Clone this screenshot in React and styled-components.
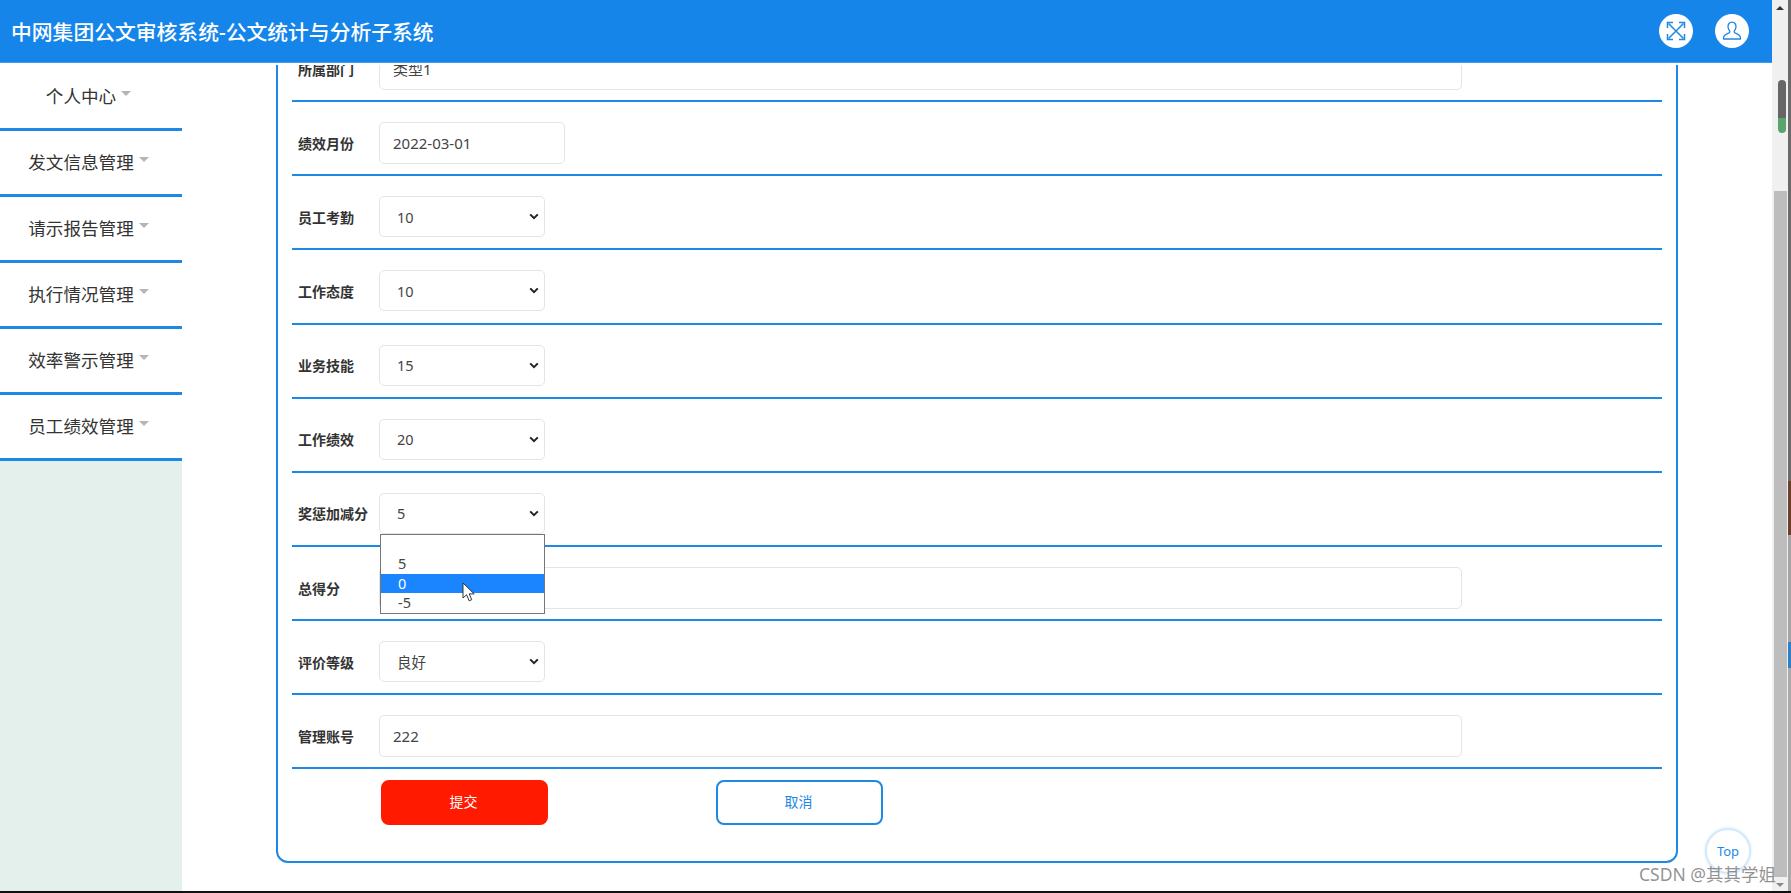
import styled, { createGlobalStyle } from "styled-components";

const BLUE = "#1e88e5";
const FONT = `"Noto Sans", "Noto Sans CJK SC", sans-serif`;
const CHEVRON = `url("data:image/svg+xml,%3Csvg xmlns='http://www.w3.org/2000/svg' width='10' height='7' viewBox='0 0 10 7'%3E%3Cpath d='M1.2 1.400 5 5.200 8.800 1.400' fill='none' stroke='%23222' stroke-width='2'/%3E%3C/svg%3E")`;

const GlobalStyle = createGlobalStyle`
  html, body {
    margin: 0;
    padding: 0;
    height: 100%;
    overflow: hidden;
    background: #fff;
  }
  * {
    box-sizing: border-box;
  }
`;

const Screen = styled.div`
  position: relative;
  width: 1791px;
  height: 893px;
  display: flex;
  flex-direction: column;
  overflow: hidden;
  font-family: ${FONT};
  border-bottom: 2px solid #111;
`;

const Window = styled.div`
  flex: 1;
  min-height: 0;
  display: flex;
`;

const Main = styled.div`
  flex: 1;
  min-width: 0;
  display: flex;
  flex-direction: column;
`;

const Header = styled.header`
  height: 63px;
  flex: none;
  margin-bottom: 2px;
  display: flex;
  align-items: center;
  justify-content: space-between;
  padding: 0 23px 1px 11px;
  background: #1585ea;
  border-bottom: 1px solid #3f9cf0;
`;

const Title = styled.h1`
  margin: 0;
  font-size: 20.8px;
  font-weight: 500;
  color: #fff;
`;

const HeaderTools = styled.div`
  display: flex;
  gap: 22px;
`;

const RoundTool = styled.span`
  width: 34px;
  height: 34px;
  border-radius: 50%;
  background: #fff;
  display: flex;
  align-items: center;
  justify-content: center;
`;

const Body = styled.div`
  flex: 1;
  min-height: 0;
  display: flex;
  overflow: hidden;
`;

const Sidebar = styled.nav`
  width: 182px;
  flex: none;
  background: #e3f0eb;
`;

const MenuItem = styled.div`
  height: 66px;
  padding: 0 5px 3px 0;
  display: flex;
  align-items: center;
  justify-content: center;
  gap: 5px;
  background: #fff;
  border-bottom: 3px solid ${BLUE};
  font-size: 17.6px;
  color: #333;
`;

const Caret = styled.i`
  width: 0;
  height: 0;
  margin-bottom: 3px;
  border-left: 5px solid transparent;
  border-right: 5px solid transparent;
  border-top: 5px solid #b5b5b5;
`;

const Content = styled.main`
  flex: 1;
  min-width: 0;
  padding-left: 94px;
`;

const Panel = styled.section`
  width: 1402px;
  margin-top: -39px;
  height: 837px;
  padding: 0 14px;
  border: 2px solid ${BLUE};
  border-radius: 12px;
`;

const Row = styled.div`
  height: 74.15px;
  padding: 19px 0 10px 6px;
  display: flex;
  align-items: center;
  border-bottom: 2px solid ${BLUE};
`;

const Label = styled.label`
  width: 81px;
  flex: none;
  font-size: 14px;
  font-weight: 600;
  color: #333;
`;

const Field = styled.input`
  width: ${(p) => p.$width}px;
  height: 42px;
  padding: 0 13px;
  border: 1px solid #e2e4e8;
  border-radius: 5px;
  background: #fff;
  font-family: ${FONT};
  font-size: 15px;
  color: #444;
  outline: none;
`;

const Picker = styled.select`
  appearance: none;
  display: block;
  width: 166px;
  height: 41px;
  padding: 0 13px 0 17px;
  border: 1px solid #e2e4e8;
  border-radius: 5px;
  background: #fff ${CHEVRON} no-repeat right 5px center;
  font-family: ${FONT};
  font-size: 14.5px;
  color: #444;
  outline: none;
`;

const PickerWrap = styled.div`
  position: relative;
`;

const OptionList = styled.ul`
  position: absolute;
  z-index: 3;
  top: 41px;
  left: 1px;
  width: 165px;
  margin: 0;
  padding: 0 0 1px;
  list-style: none;
  background: #fff;
  border: 1px solid #767676;
`;

const OptionItem = styled.li`
  height: 19.3px;
  padding-left: 17px;
  font-size: 14.5px;
  line-height: 18px;
  color: ${(p) => (p.$active ? "#fff" : "#444")};
  background: ${(p) => (p.$active ? "#1a85ff" : "#fff")};
`;

const Pointer = styled.svg`
  position: absolute;
  z-index: 4;
  left: 83px;
  top: 89px;
`;

const Actions = styled.div`
  display: flex;
  gap: 168px;
  padding: 11px 0 0 89px;
`;

const ActionButton = styled.button`
  width: 167px;
  height: 45px;
  padding: 0 2px 3px 0;
  border-radius: 8px;
  border: 2px solid ${(p) => (p.$primary ? "#ff1a00" : BLUE)};
  background: ${(p) => (p.$primary ? "#ff1a00" : "#fff")};
  color: ${(p) => (p.$primary ? "#fff" : BLUE)};
  font-family: ${FONT};
  font-size: 14px;
`;

const ScrollBar = styled.div`
  width: 16px;
  flex: none;
  position: relative;
  background: #f0f0f0;
`;

const ScrollTrack = styled.div`
  position: absolute;
  left: 2px;
  right: 1px;
  top: 191px;
  bottom: 14px;
  background: #bdbdbd;
`;

const ScrollThumb = styled.div`
  position: absolute;
  left: 6px;
  top: 80px;
  width: 8px;
  height: 53px;
  border-radius: 4px;
  background: linear-gradient(#666 0 72%, #5aa56d 72% 100%);
`;

const ScrollArrow = styled.i`
  position: absolute;
  left: 4px;
  ${(p) => (p.$down ? "bottom: 4px;" : "top: 6px;")}
  width: 0;
  height: 0;
  border-left: 4px solid transparent;
  border-right: 4px solid transparent;
  ${(p) => (p.$down ? "border-top: 4px solid #888;" : "border-bottom: 4px solid #333;")}
`;

const DesktopSliver = styled.div`
  width: 3px;
  flex: none;
  background: linear-gradient(
    #6a6a6a 0 54%,
    #6b3f2a 54% 60%,
    #a5a5a5 60% 72%,
    #2f7fc4 72% 75%,
    #aaa 75% 100%
  );
`;

const TopButton = styled.a`
  position: absolute;
  z-index: 5;
  left: 1705px;
  top: 828px;
  width: 46px;
  height: 46px;
  border-radius: 50%;
  display: flex;
  align-items: center;
  justify-content: center;
  background: #fff;
  border: 2px solid #d4e9fa;
  box-shadow: 0 0 3px #cfe6fa;
  font-size: 13px;
  color: ${BLUE};
`;

const Watermark = styled.span`
  position: absolute;
  z-index: 6;
  left: 1639px;
  top: 861px;
  font-size: 17.5px;
  color: rgba(110, 110, 110, 0.75);
  white-space: nowrap;
`;

const menuItems = ["个人中心", "发文信息管理", "请示报告管理", "执行情况管理", "效率警示管理", "员工绩效管理"];

const ExpandIcon = () => (
  <svg width="20" height="20" viewBox="0 0 20 20" fill="none" stroke={BLUE} strokeWidth="1.5">
    <path d="M2.5 2.5 17.5 17.5M17.5 2.5 2.5 17.5" />
    <path d="M1.5 7V1.5H7M13 1.5H18.5V7M18.5 13V18.5H13M7 18.5H1.5V13" />
  </svg>
);

const UserIcon = () => (
  <svg width="20" height="20" viewBox="0 0 20 20" fill="none" stroke={BLUE} strokeWidth="1.3">
    <path d="M10 1.2c-2.6 0-4 2-4 4.4 0 1.800.8 3.200 1.600 4.200.5.700.3 1.600-.5 2-1.800.9-4.600 1.700-5.300 3.700-.3.900-.2 2.500-.2 2.500h16.800s.1-1.600-.2-2.500c-.7-2-3.500-2.800-5.300-3.700-.8-.4-1-1.300-.5-2 .8-1 1.600-2.400 1.600-4.200 0-2.400-1.400-4.400-4-4.400Z" />
  </svg>
);

const CursorIcon = () => (
  <Pointer width="14" height="21" viewBox="0 0 14 21">
    <path d="M1 1v15l3.600-3.200 2.500 6 2.600-1.100-2.500-5.800h5Z" fill="#fff" stroke="#333" strokeWidth="1" />
  </Pointer>
);

export default function App() {
  return (
    <>
      <GlobalStyle />
      <Screen>
        <Window>
          <Main>
            <Header>
              <Title>中网集团公文审核系统-公文统计与分析子系统</Title>
              <HeaderTools>
                <RoundTool>
                  <ExpandIcon />
                </RoundTool>
                <RoundTool>
                  <UserIcon />
                </RoundTool>
              </HeaderTools>
            </Header>
            <Body>
              <Sidebar>
                {menuItems.map((item) => (
                  <MenuItem key={item}>
                    {item}
                    <Caret />
                  </MenuItem>
                ))}
              </Sidebar>
              <Content>
                <Panel>
                  <Row>
                    <Label>所属部门</Label>
                    <Field $width={1083} defaultValue="类型1" readOnly />
                  </Row>
                  <Row>
                    <Label>绩效月份</Label>
                    <Field $width={186} defaultValue="2022-03-01" readOnly />
                  </Row>
                  <Row>
                    <Label>员工考勤</Label>
                    <Picker defaultValue="10">
                      <option>10</option>
                    </Picker>
                  </Row>
                  <Row>
                    <Label>工作态度</Label>
                    <Picker defaultValue="10">
                      <option>10</option>
                    </Picker>
                  </Row>
                  <Row>
                    <Label>业务技能</Label>
                    <Picker defaultValue="15">
                      <option>15</option>
                    </Picker>
                  </Row>
                  <Row>
                    <Label>工作绩效</Label>
                    <Picker defaultValue="20">
                      <option>20</option>
                    </Picker>
                  </Row>
                  <Row>
                    <Label>奖惩加减分</Label>
                    <PickerWrap>
                      <Picker defaultValue="5">
                        <option>5</option>
                      </Picker>
                      <OptionList>
                        <OptionItem />
                        <OptionItem>5</OptionItem>
                        <OptionItem $active>0</OptionItem>
                        <OptionItem>-5</OptionItem>
                      </OptionList>
                      <CursorIcon />
                    </PickerWrap>
                  </Row>
                  <Row>
                    <Label>总得分</Label>
                    <Field $width={1083} readOnly />
                  </Row>
                  <Row>
                    <Label>评价等级</Label>
                    <Picker defaultValue="良好">
                      <option>良好</option>
                    </Picker>
                  </Row>
                  <Row>
                    <Label>管理账号</Label>
                    <Field $width={1083} defaultValue="222" readOnly />
                  </Row>
                  <Actions>
                    <ActionButton $primary>提交</ActionButton>
                    <ActionButton>取消</ActionButton>
                  </Actions>
                </Panel>
              </Content>
            </Body>
          </Main>
          <ScrollBar>
            <ScrollTrack />
            <ScrollThumb />
            <ScrollArrow />
            <ScrollArrow $down />
          </ScrollBar>
          <DesktopSliver />
        </Window>
        <TopButton>Top</TopButton>
        <Watermark>CSDN @其其学姐</Watermark>
      </Screen>
    </>
  );
}
